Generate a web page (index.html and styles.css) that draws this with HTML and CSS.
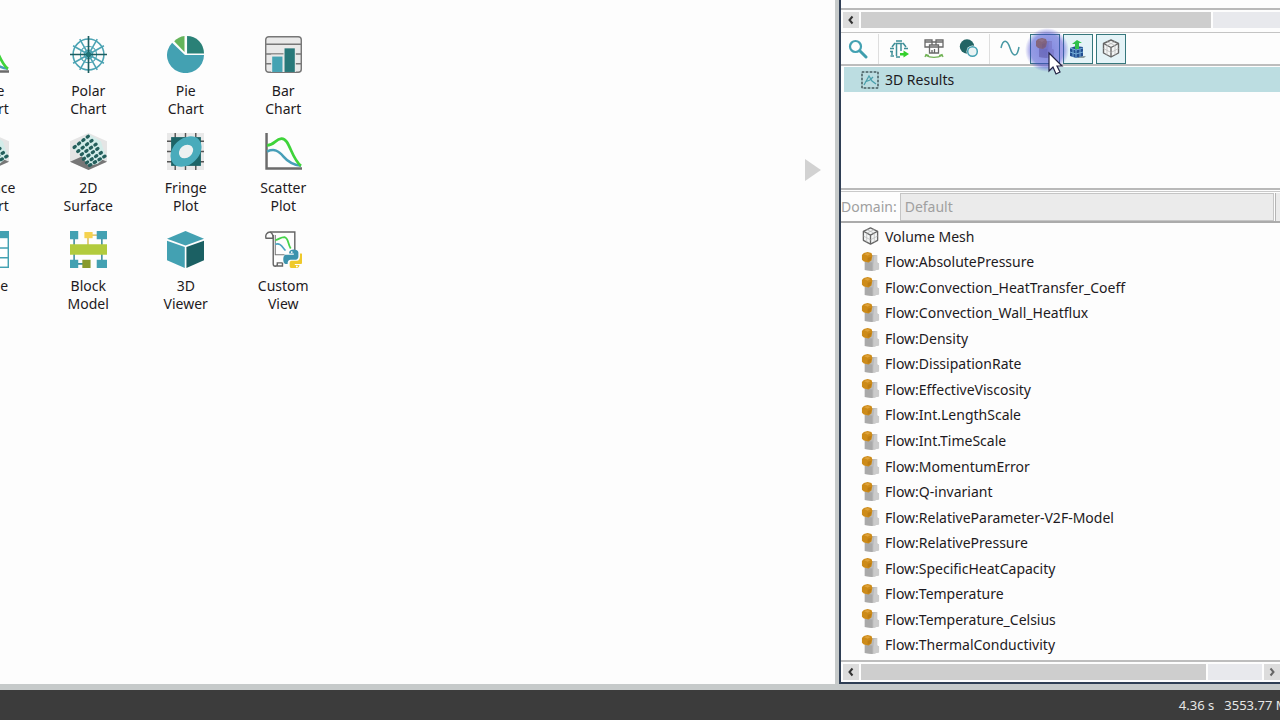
FILE: index.html
```
<!DOCTYPE html>
<html lang="en">
<head>
    <meta charset="UTF-8">
    <meta name="viewport" content="width=device-width, initial-scale=1.0">
    <title>3D Results</title>
    <link rel="stylesheet" href="styles.css">
</head>
<body>
    <svg class="symbols" aria-hidden="true">
        <symbol id="flow" viewBox="0 0 20 22">
            <path d="M4 6 L9 3 L17 3 L17 11 L19 12 L19 18 L12 20 L4 19 Z" fill="#b9b9b9"/>
            <path d="M14 4 L17 3 L17 11 L19 12 L19 18 L13 20 L13 13 Z" fill="#cbcbcb"/>
            <path d="M4 10 L12 11 L12 20 L4 19 Z" fill="#a9a9a9"/>
            <path d="M1 3 L3 1 L7 0 L11 1 L12 4 L11 9 L8 11 L3 10 L1 8 Z" fill="#cd8b18"/>
            <path d="M3 2 L7 1 L10 2 L7 4 Z" fill="#dfa23a"/>
            <path d="M7 6 L11 5 L10 9 L7 10 Z" fill="#bd7d14"/>
        </symbol>
        <symbol id="mesh" viewBox="0 0 20 20">
            <g fill="none" stroke="#666" stroke-width="1.4" stroke-linejoin="round">
                <path d="M10 1 L17.500 4.500 V14 L10 18 L2.500 14 V4.500 Z" fill="#f4f6f6"/>
                <path d="M2.500 4.500 L10 8.500 L17.500 4.500 M10 8.500 V18"/>
                <path d="M6 2.700 L14 6.500 V16 M14 2.700 L6 6.500 V16 M2.500 9.500 L10 13.500 L17.500 9.500" stroke="#b5b5b5" stroke-width=".7"/>
            </g>
        </symbol>
        <symbol id="line-chart" viewBox="0 0 36 36">
            <path d="M1.500 0 V34.500 H36" fill="none" stroke="#6b6b6b" stroke-width="2.400"/>
            <path d="M2 18 C9 15 13 17 18 23 S28 31 35 32" fill="none" stroke="#479fb8" stroke-width="2.400"/>
            <path d="M2 12 C9 12 10 6 16 5.500 C24 5 25 24 35 32" fill="none" stroke="#3fd43a" stroke-width="2.600"/>
        </symbol>
        <symbol id="surface" viewBox="0 0 36 36">
            <path d="M18 0 L36 8 V28 L18 36 L0 28 V8 Z" fill="#e5e5e5"/>
            <path d="M0 28 L18 20 L36 28 L18 36 Z" fill="#777"/>
            <path d="M2 14 L18 1 L30 8 L35 23 L27 30 L18 32 L12 23 Z" fill="#d3ece9"/>
            <g fill="none" stroke="#245f5c" stroke-width="3.200" stroke-linecap="round" stroke-dasharray="1.400 4">
                <path d="M4 14 L18 3"/>
                <path d="M7.500 18 L23 6"/>
                <path d="M11 21 L28 9"/>
                <path d="M13 25.500 L30 13"/>
                <path d="M16 29 L32 18"/>
                <path d="M19 31.500 L34 22.500"/>
            </g>
        </symbol>
    </svg>

    <main class="workspace">
        <section class="canvas">
            <div class="views">
                <button class="view">
                    <svg class="view-icon"><use href="#line-chart"/></svg>
                    <span>Line<br>Chart</span>
                </button>
                <button class="view">
                    <svg class="view-icon" viewBox="0 0 36 36" fill="none">
                        <g stroke="#4ba3b3" stroke-width="1.500">
                            <circle cx="18" cy="18" r="15"/>
                            <circle cx="18" cy="18" r="8" stroke-width="1"/>
                            <circle cx="18" cy="18" r="4"/>
                            <path d="M9.500 3 L26.500 33 M26.500 3 L9.500 33 M3 9.500 L33 26.500 M33 9.500 L3 26.500"/>
                        </g>
                        <path d="M18 0 V36 M0 18 H36" stroke="#1d5e60" stroke-width="1.600"/>
                        <circle cx="18" cy="18" r="2.500" fill="#1d7375"/>
                    </svg>
                    <span>Polar<br>Chart</span>
                </button>
                <button class="view">
                    <svg class="view-icon" viewBox="0 0 36 36">
                        <path d="M17.500 18.500 H36 A18 17.500 0 1 1 5 6.500 Z" fill="#43a1b2"/>
                        <path d="M19.500 0 A16.500 17 0 0 1 36 17 H19.500 Z" fill="#2a8177"/>
                        <path d="M17 0 V15.500 L7 5 A17 17 0 0 1 17 0 Z" fill="#65b45a"/>
                    </svg>
                    <span>Pie<br>Chart</span>
                </button>
                <button class="view">
                    <svg class="view-icon" viewBox="0 0 36 36">
                        <rect x=".7" y=".7" width="34.600" height="34.600" rx="3" fill="#e9e9e9" stroke="#777" stroke-width="1.400"/>
                        <path d="M1 8 H35 M1 17.500 H35 M1 27 H35" stroke="#777" stroke-width="1.300"/>
                        <path d="M6 18 H18 V11 H30 V35 H6 Z" fill="#e9e9e9"/>
                        <path d="M7 20 H17 V35 H7 Z" fill="#45a3b3"/>
                        <path d="M19 12 H29 V35 H19 Z" fill="#287879"/>
                    </svg>
                    <span>Bar<br>Chart</span>
                </button>

                <button class="view">
                    <svg class="view-icon"><use href="#surface"/></svg>
                    <span>Surface<br>Chart</span>
                </button>
                <button class="view">
                    <svg class="view-icon"><use href="#surface"/></svg>
                    <span>2D<br>Surface</span>
                </button>
                <button class="view">
                    <svg class="view-icon" viewBox="0 0 36 36">
                        <rect width="36" height="36" fill="#e9e9e9"/>
                        <path d="M8 0 V36 M18 0 V36 M28 0 V36 M0 8 H36 M0 18 H36 M0 28 H36" stroke="#555" stroke-width="1.400"/>
                        <rect x="4" y="4" width="29" height="28" fill="#1c6467"/>
                        <ellipse cx="18.500" cy="18" rx="17" ry="12.500" transform="rotate(-43 18.500 18)" fill="#49abbb"/>
                        <ellipse cx="18.500" cy="18" rx="7.500" ry="6" transform="rotate(-40 18.500 18)" fill="#edf1f1"/>
                    </svg>
                    <span>Fringe<br>Plot</span>
                </button>
                <button class="view">
                    <svg class="view-icon"><use href="#line-chart"/></svg>
                    <span>Scatter<br>Plot</span>
                </button>

                <button class="view">
                    <svg class="view-icon" viewBox="0 0 36 36">
                        <rect x=".7" y=".7" width="34.600" height="34.600" fill="#fff" stroke="#43a1b2" stroke-width="1.400"/>
                        <rect width="36" height="7" fill="#43a1b2"/>
                        <path d="M1 16.500 H35 M1 26 H35 M12 7 V35 M24 7 V35" stroke="#43a1b2" stroke-width="1.300"/>
                    </svg>
                    <span>Table</span>
                </button>
                <button class="view">
                    <svg class="view-icon" viewBox="0 0 36 36">
                        <path d="M4 6 V32 M31 6 V32 M4 32 H16" stroke="#3b8c9c" stroke-width="1.500" fill="none"/>
                        <path d="M17.500 4 V15 M17 4 H30" stroke="#d5b644" stroke-width="1.300" fill="none"/>
                        <path d="M0 0 H8 V8 H0 Z M26 0 H36 V8 H26 Z M0 28 H8 V36 H0 Z M26 28 H36 V36 H26 Z" fill="#43a1b2"/>
                        <path d="M14 1 H22 V7 H14 Z" fill="#f5d24e"/>
                        <path d="M0 13 H36 V23 H0 Z" fill="#b2cb3d"/>
                        <path d="M12 28 H20 V36 H12 Z" fill="#879a2c"/>
                    </svg>
                    <span>Block<br>Model</span>
                </button>
                <button class="view">
                    <svg class="view-icon" viewBox="0 0 36 36">
                        <path d="M18 0 L36 7.500 L18 14 L0 7.500 Z" fill="#43a1b2"/>
                        <path d="M0 9.500 L17.300 15.500 V36 L0 28.500 Z" fill="#43a1b2"/>
                        <path d="M36 9.500 L18.900 15.500 V36 L36 28.500 Z" fill="#1b6063"/>
                    </svg>
                    <span>3D<br>Viewer</span>
                </button>
                <button class="view">
                    <svg class="view-icon" viewBox="0 0 36 36">
                        <path d="M8 7 H1 C0 4 2 1 5 1 H29 V19 M8 4 V32 C8 35 12 35 12 32 V31 H17 M8 34 H17 V31" fill="none" stroke="#666" stroke-width="1.400"/>
                        <path d="M5 1 C7 2 8 4 8 7" fill="none" stroke="#666" stroke-width="1.400"/>
                        <path d="M10 4 V23 H19" fill="none" stroke="#777"/>
                        <path d="M10 13 C15 11 17 16 20 19" fill="none" stroke="#4aa3c0" stroke-width="1.600"/>
                        <path d="M10 9 C14 8 15 6 19 6 C23 7 22 12 25 17" fill="none" stroke="#45d34a" stroke-width="1.700"/>
                        <path d="M23.500 21 C23.500 17 32.500 17 32.500 21 V25 C32.500 27 31 28 29 28 H25 C23 28 22 29 22 32 H20 C17 32 17 23 20 23 H28 V22 H23.500 Z" fill="#3c93ad"/>
                        <path d="M34 22 H35 C39 22 38 32 35 32 H29 V33 H33.500 C33.500 38 24 38 24 34 V31 C24 29 26 29 27 29 H31 C33 29 34 27 34 25 Z" fill="#efc92b"/>
                        <circle cx="26" cy="20.500" r=".9" fill="#fff"/>
                        <circle cx="31" cy="34.500" r=".9" fill="#fff"/>
                    </svg>
                    <span>Custom<br>View</span>
                </button>
            </div>
            <button class="expand" aria-label="Expand">
                <svg width="16" height="22" viewBox="0 0 16 22"><path d="M0 0 L16 11 L0 22 Z" fill="#d2d2d2"/></svg>
            </button>
        </section>

        <aside class="panel">
            <div class="panel-top"></div>

            <div class="scrollbar scrollbar-top">
                <button class="scroll-btn" aria-label="Scroll left">
                    <svg width="8" height="10" viewBox="0 0 8 10"><path d="M5.500 1.500 L2.500 5 L5.500 8.500" fill="none" stroke="#333" stroke-width="2"/></svg>
                </button>
                <div class="thumb"></div>
                <div class="track"></div>
            </div>

            <div class="toolbar">
                <button class="tool" aria-label="Search">
                    <svg width="20" height="20" viewBox="0 0 20 20" fill="none">
                        <path d="M12 12 L18 18" stroke="#3f9ead" stroke-width="3" stroke-linecap="round"/>
                        <circle cx="7.500" cy="7.500" r="5.500" stroke="#43a1b2" stroke-width="2.200"/>
                    </svg>
                </button>
                <span class="separator"></span>
                <button class="tool" aria-label="Export tree">
                    <svg width="20" height="20" viewBox="0 0 20 20" fill="none" stroke="#3f8f98" stroke-width="1.500">
                        <path d="M7 2 H13 M6.500 4.500 H13.500 M6 4 L3 8 M14 4 L17 8 M7.500 5 V17 M12 5 V12 M3 12 V16"/>
                        <path d="M1 9.500 H5 M15 9.500 H19 M1 12.500 H4 M1.500 17 H5 M7 18 H11"/>
                        <path d="M11 14 H14.500 V11.500 L20 15 L14.500 18.500 V16.500 H11 Z" fill="#33d12c" stroke="none"/>
                    </svg>
                </button>
                <button class="tool" aria-label="Swap windows">
                    <svg width="20" height="20" viewBox="0 0 20 20" fill="none" stroke="#686868" stroke-width="1.300">
                        <path d="M1 1 H8 V8 H1 Z M12 1 H19 V8 H12 Z M1 3 H8 M12 3 H19 M8 3 H12"/>
                        <path d="M5.500 6 H14.500 V14 H5.500 Z" fill="#fff"/>
                        <path d="M5.500 8 H14.500 M8 11 V14 M10.500 10 V14"/>
                        <path d="M2 16.500 C6 19 14 19 18 16.500 M1 18 L2 15.500 L5 16.500 M19 18 L18 15.500 L15 16.500" stroke="#72b356"/>
                    </svg>
                </button>
                <button class="tool" aria-label="Compare">
                    <svg width="20" height="20" viewBox="0 0 20 20">
                        <circle cx="8" cy="7.500" r="7.200" fill="#226464"/>
                        <circle cx="13.500" cy="12.500" r="6" fill="#fff"/>
                        <circle cx="13.500" cy="12.500" r="4.800" fill="#e9f3f4" stroke="#43a1b2" stroke-width="1.500"/>
                    </svg>
                </button>
                <span class="separator"></span>
                <button class="tool" aria-label="Curves">
                    <svg width="20" height="20" viewBox="0 0 20 20"><path d="M1 9 C3 0 7 0 10 9 S17 19 19 8" fill="none" stroke="#4798a3" stroke-width="1.500"/></svg>
                </button>
                <div class="toggles">
                    <button class="tool toggle" aria-label="Surface results">
                        <svg width="20" height="22"><use href="#flow"/></svg>
                    </button>
                    <button class="tool toggle" aria-label="Volume results">
                        <svg width="20" height="20" viewBox="0 0 20 20">
                            <path d="M9 17 H18 L16 19 H10 Z" fill="#8da0a3"/>
                            <path d="M2 9 L8 7 L15 8 V17 L8 19 L2 17 Z" fill="#234f92"/>
                            <path d="M2 9 L8 11 L15 9 M8 11 V19 M2 13 L8 15 L15 13 M5 10 V18 M12 10 V18" fill="none" stroke="#7cb6dd" stroke-width=".9"/>
                            <path d="M7 10 V5 H4 L9 1 L14 4 H11 V10 Z" fill="#2fc04a"/>
                        </svg>
                    </button>
                    <button class="tool toggle" aria-label="Mesh">
                        <svg width="20" height="20"><use href="#mesh"/></svg>
                    </button>
                </div>
                <svg class="pointer" width="44" height="44" viewBox="0 0 44 44">
                    <defs>
                        <radialGradient id="glow">
                            <stop offset="0" stop-color="#4646d2" stop-opacity=".62"/>
                            <stop offset=".75" stop-color="#4646d2" stop-opacity=".5"/>
                            <stop offset="1" stop-color="#4646d2" stop-opacity="0"/>
                        </radialGradient>
                    </defs>
                    <circle cx="22" cy="22" r="22" fill="url(#glow)"/>
                    <path d="M24 25 V43 L28 39 L31 46 L35 44 L32 38 H37 Z" fill="#fff" stroke="#222244" stroke-width="1.200"/>
                </svg>
            </div>

            <div class="tree">
                <a class="tree-row" href="#results">
                    <svg width="18" height="18" viewBox="0 0 18 18" fill="none">
                        <rect x="1" y="1" width="16" height="16" stroke="#7f989b"/>
                        <rect x="1" y="1" width="16" height="16" stroke="#4f6669" stroke-width="1.500" stroke-dasharray="2 2"/>
                        <path d="M3 14 L8 5 L11 10 L15 13 M4 11 L9 9 L12 6" stroke="#4ba0ad" stroke-width="1.300"/>
                    </svg>
                    3D Results
                </a>
            </div>

            <div class="domain">
                <label for="domain">Domain:</label>
                <select id="domain" disabled>
                    <option>Default</option>
                </select>
                <span class="domain-end"></span>
            </div>

            <ul class="results" id="results">
                <li><svg><use href="#mesh"/></svg>Volume Mesh</li>
                <li><svg><use href="#flow"/></svg>Flow:AbsolutePressure</li>
                <li><svg><use href="#flow"/></svg>Flow:Convection_HeatTransfer_Coeff</li>
                <li><svg><use href="#flow"/></svg>Flow:Convection_Wall_Heatflux</li>
                <li><svg><use href="#flow"/></svg>Flow:Density</li>
                <li><svg><use href="#flow"/></svg>Flow:DissipationRate</li>
                <li><svg><use href="#flow"/></svg>Flow:EffectiveViscosity</li>
                <li><svg><use href="#flow"/></svg>Flow:Int.LengthScale</li>
                <li><svg><use href="#flow"/></svg>Flow:Int.TimeScale</li>
                <li><svg><use href="#flow"/></svg>Flow:MomentumError</li>
                <li><svg><use href="#flow"/></svg>Flow:Q-invariant</li>
                <li><svg><use href="#flow"/></svg>Flow:RelativeParameter-V2F-Model</li>
                <li><svg><use href="#flow"/></svg>Flow:RelativePressure</li>
                <li><svg><use href="#flow"/></svg>Flow:SpecificHeatCapacity</li>
                <li><svg><use href="#flow"/></svg>Flow:Temperature</li>
                <li><svg><use href="#flow"/></svg>Flow:Temperature_Celsius</li>
                <li><svg><use href="#flow"/></svg>Flow:ThermalConductivity</li>
            </ul>

            <div class="scrollbar scrollbar-bottom">
                <button class="scroll-btn" aria-label="Scroll left">
                    <svg width="8" height="10" viewBox="0 0 8 10"><path d="M5.500 1.500 L2.500 5 L5.500 8.500" fill="none" stroke="#333" stroke-width="2"/></svg>
                </button>
                <div class="thumb"></div>
                <div class="track"></div>
                <button class="scroll-btn" aria-label="Scroll right">
                    <svg width="8" height="10" viewBox="0 0 8 10"><path d="M2.500 1.500 L5.500 5 L2.500 8.500" fill="none" stroke="#666" stroke-width="2"/></svg>
                </button>
            </div>
        </aside>
    </main>

    <footer class="status">
        <span>4.36 s</span>
        <span>3553.77 MB</span>
    </footer>
</body>
</html>
```

FILE: styles.css
```
* {
    box-sizing: border-box;
}
body {
    margin: 0;
    height: 100vh;
    display: flex;
    flex-direction: column;
    overflow: hidden;
    background-color: #fdfdfd;
    color: #1d1a22;
    font-family: "Noto Sans", "Open Sans", sans-serif;
    font-size: 14px;
    line-height: 18px;
}
button {
    padding: 0;
    border: none;
    background: none;
    color: inherit;
    font: inherit;
}
svg {
    display: block;
    flex: none;
}
.symbols {
    position: absolute;
    width: 0;
    height: 0;
}
.workspace {
    flex: 1;
    display: flex;
    min-height: 0;
    border-bottom: 6px solid #c6caca;
}

/* left side: view icons */
.canvas {
    flex: 1;
    display: flex;
    justify-content: space-between;
    align-items: flex-start;
    padding-top: 36px;
    overflow: hidden;
}
.views {
    display: grid;
    grid-template-columns: repeat(4, 1fr);
    grid-template-rows: repeat(3, 1fr);
    width: 390px;
    height: 292px;
    margin-left: -58px;
}
.view {
    display: flex;
    flex-direction: column;
    align-items: center;
    gap: 9px;
    text-align: center;
}
.view-icon {
    width: 37px;
    height: 37px;
}
.expand {
    margin: 123px 14px 0 0;
}

/* right side: results panel */
.panel {
    width: 445px;
    display: flex;
    flex-direction: column;
    border-left: 4px solid #c6caca;
    box-shadow: inset 2px 0 #2f3e54, inset 0 -2px #2f3e54;
    padding: 0 0 2px 2px;
}
.panel-top {
    height: 10px;
    border-bottom: 2px solid #b9b9b9;
}
.scrollbar {
    display: flex;
    gap: 2px;
    padding: 2px 0 4px 2px;
    height: 22px;
}
.scroll-btn {
    width: 16px;
    display: flex;
    align-items: center;
    justify-content: center;
    background-color: #dcdcdc;
}
.thumb {
    background-color: #cecece;
}
.track {
    flex: 1;
    background-color: #e8e9ed;
}
.scrollbar-top .thumb {
    width: 80%;
}
.scrollbar-bottom .thumb {
    width: 79%;
}
.scrollbar-bottom {
    padding-bottom: 2px;
    height: 20px;
}

.toolbar {
    position: relative;
    display: flex;
    align-items: center;
    gap: 5px;
    height: 34px;
    padding-left: 2px;
    border-top: 1px solid #c4c4c4;
    border-bottom: 2px solid #bdbdbd;
}
.tool {
    width: 30px;
    height: 30px;
    display: flex;
    align-items: center;
    justify-content: center;
}
.separator {
    width: 1px;
    height: 30px;
    background-color: #dedede;
}
.toggles {
    display: flex;
    gap: 3px;
}
.toggle {
    border: 1px solid #35777c;
    background-color: #e4f3f7;
}
.pointer {
    position: absolute;
    left: 184px;
    top: -5px;
    overflow: visible;
    pointer-events: none;
}

.tree {
    height: 124px;
    padding: 1px 0 0 3px;
    border-bottom: 2px solid #b9b9b9;
}
.tree-row {
    display: flex;
    align-items: center;
    gap: 6px;
    height: 25px;
    padding-left: 17px;
    background-color: #bcdde1;
    color: inherit;
    text-decoration: none;
}
.domain {
    display: flex;
    align-items: center;
    gap: 3px;
    height: 32px;
    margin-top: 1px;
    border-top: 1px solid #c9c9c9;
    border-bottom: 2px solid #ababab;
    color: #a0a0a0;
}
.domain select {
    flex: 1;
    height: 28px;
    padding: 0 4px;
    appearance: none;
    border: 1px solid #c5c5c5;
    border-radius: 0;
    background-color: #ebebeb;
    color: #a0a0a0;
    opacity: 1;
    font: inherit;
}
.domain-end {
    width: 5px;
    height: 28px;
    margin-left: -2px;
    background-color: #ebebeb;
    border-left: 1px solid #b5b5b5;
}
.results {
    flex: 1;
    display: flex;
    flex-direction: column;
    margin: 0;
    padding: 1px 0 2px 20px;
    list-style: none;
    border-bottom: 2px solid #bdbdbd;
}
.results li {
    flex: 1;
    display: flex;
    align-items: center;
    gap: 5px;
}
.results svg {
    width: 19px;
    height: 21px;
}

.status {
    display: flex;
    align-items: center;
    justify-content: flex-end;
    gap: 10px;
    height: 30px;
    margin-right: -16px;
    background-color: #3c3c3c;
    color: #e6e6e6;
    font-size: 13px;
}
```
